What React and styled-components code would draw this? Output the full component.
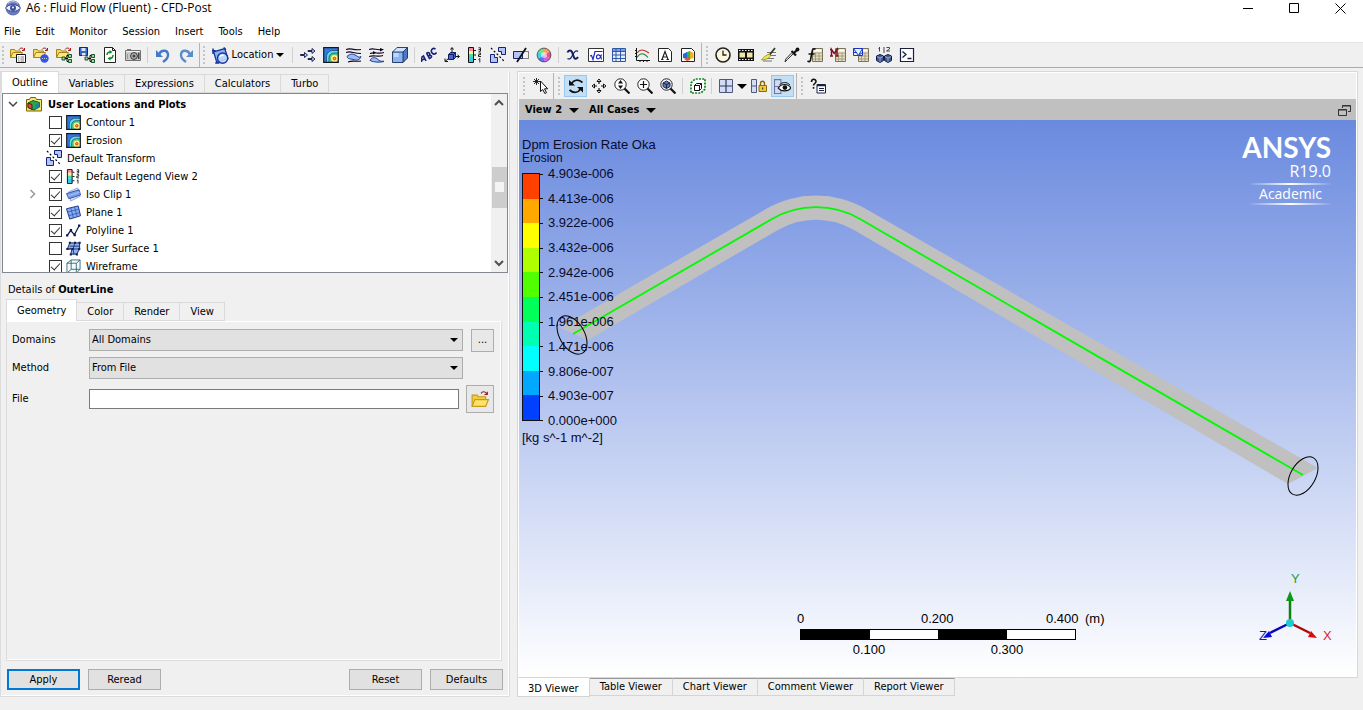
import React from 'react';
import styled, { createGlobalStyle, css } from 'styled-components';

const GlobalStyle = createGlobalStyle`
  * { box-sizing: border-box; }
  html, body { margin: 0; padding: 0; }
  body, button, input, select {
    font-family: "DejaVu Sans Condensed", "DejaVu Sans", sans-serif;
    font-size: 11px;
    line-height: 14px;
    color: #000;
  }
  button { padding: 0; border: 0; background: none; }
`;

/* ---------- icons ---------- */

const folder = (
  <>
    <path d="M.5 10.500v-8h4l1 1.500h5v2" fill="#f6d860" stroke="#a88418" />
    <path d="M.5 10.500 3 5.500h9.500l-2.500 5z" fill="#ffe680" stroke="#a88418" />
    <path d="M9 2.500c1.500-2 4-2 5 .5m.5-2v2.500h-2.500" fill="none" stroke="#a01818" />
  </>
);

const treeGlyph = (
  <>
    <path d="M8 11.500h4m-1-3v6m0-6h1m-1 6h1" stroke="#000" fill="none" />
    <path d="M6 10h3v3H6zM12.500 7.500h3v3h-3zM12.500 12.500h3v3h-3z" fill="#9be08a" stroke="#042" strokeWidth=".9" />
  </>
);

const contour = (
  <>
    <path d="M1 1h14v14H1z" fill="#3478e4" />
    <path d="M3.500 15V10c0-4 3-6.500 6.500-6.500h5V15z" fill="#58e0e8" />
    <path d="M6 15v-4c0-3 2-5 5-5h4v9z" fill="#50c878" />
    <circle cx="11.500" cy="11.500" r="3.400" fill="#fff080" />
    <circle cx="11.500" cy="11.500" r="1.300" fill="#ffb040" stroke="#d03018" />
    <path d="M3.500 15V10c0-4 3-6.500 6.500-6.500h5M6 15v-4c0-3 2-5 5-5h4" fill="none" stroke="#14406c" strokeWidth=".7" />
    <path d="M.7.7h14.600v14.600H.7z" fill="none" stroke="#101820" strokeWidth="1.200" />
  </>
);

const magnifier = (
  <>
    <circle cx="6.500" cy="6.500" r="5.700" fill="#fff" stroke="#222" />
    <path d="m10.500 10.500 5 5" stroke="#111" strokeWidth="2.200" />
  </>
);

const calcPad = (
  <>
    <path d="M5.500 1.500h10v13h-10z" fill="#e6dfc4" stroke="#7b7358" />
    <path d="M7 3.500h7" stroke="#fff" strokeWidth="2" />
    <path d="M6 6h9M6 9h9M6 12h9M8.500 6v8M12 6v8" stroke="#9a9170" strokeWidth=".8" />
  </>
);

const transformGlyph = (
  <>
    <path d="M1 1l14 14" stroke="#000" strokeWidth="1.200" strokeDasharray="2 2" />
    <path d="M8.500.5h7v7h-4v-3h-3z" fill="#b4c4f4" stroke="#15207a" />
    <path d="M.5 7.500h4v3h3v5h-7z" fill="#b4c4f4" stroke="#15207a" />
  </>
);

const legendGlyph = (
  <>
    <path d="M1 1h6v3H1z" fill="#fa8a9c" />
    <path d="M1 4h6v3H1z" fill="#fff0a0" />
    <path d="M1 7h6v3H1z" fill="#48e0a0" />
    <path d="M1 10h6v5H1z" fill="#38c8ec" />
    <path d="M1.500.5h5v15h-5zM7 3.500h2M7 8h2M7 12.500h2" fill="none" stroke="#111" />
    <path d="M11.500.8h2v3.500h-2m2-1.700h-2M11.500 6h2v1.700h-2V9.500h2.500M12.800 11.500v4M11.500 12.500l1.300-1" fill="none" stroke="#111" strokeWidth=".9" />
  </>
);

const ICONS = {
  app: (
    <>
      <circle cx="8" cy="8" r="7.500" fill="#6878bc" />
      <path d="M.5 8C4 3.500 12 3.500 15.500 8 12 12.500 4 12.500.5 8z" fill="#eef0ff" stroke="#3d4c94" />
      <circle cx="8" cy="8" r="3" fill="#3c4f9c" />
      <circle cx="8" cy="7.500" r="1" fill="#fff" />
      <path d="M3 3.500c3-2.500 7-2.500 10 0" fill="none" stroke="#c8d0f0" />
    </>
  ),
  openCase: (
    <>
      {folder}
      <path d="M6.500 7.500h9v8h-9z" fill="#fff" stroke="#111" />
      <path d="M8 10h1.500m1 0H14m-6 2h1.500m1 0H14m-6 2h1.500m1 0H14" stroke="#555" strokeWidth=".8" />
    </>
  ),
  openResults: (
    <>
      {folder}
      <circle cx="11.500" cy="11.500" r="4.200" fill="#3452f0" />
      <path d="M9 11.500h1m1 0h1m1 0h1" stroke="#bcd" />
    </>
  ),
  openState: <>{folder}{treeGlyph}</>,
  saveState: (
    <>
      <path d="M.5.5h8v8h-8z" fill="#3d66c0" stroke="#182860" />
      <path d="M2.500 1h4v3h-4zM3 6h3.500v2.500H3z" fill="#d8e4fc" />
      {treeGlyph}
    </>
  ),
  refresh: (
    <>
      <path d="M2.500.5h8l3 3v12h-11z" fill="#fff" stroke="#222" />
      <path d="M10.500.5v3h3" fill="none" stroke="#222" />
      <path d="M5 8c0-2 1-3 3.500-3M11 8c0 2-1 3.500-3.500 3.500" fill="none" stroke="#168a28" strokeWidth="1.500" />
      <path d="M7.500 3l3 2-3 2zM8.500 9.500l-3 2 3 2z" fill="#168a28" />
    </>
  ),
  camera: (
    <>
      <path d="M.5 3.500h15v10H.5z" fill="#c8c8c8" stroke="#707070" />
      <path d="M2 2h4v1.500H2z" fill="#777" />
      <path d="M1 4.500h14" stroke="#f4f4f4" />
      <path d="M2.500 7v5" stroke="#999" />
      <circle cx="9" cy="9" r="3.400" fill="#b8b8b8" stroke="#333" />
      <circle cx="9" cy="9" r="1.600" fill="#444" />
      <path d="M13 5.500h1.500V12H13z" fill="#444" />
    </>
  ),
  undo: (
    <>
      <path d="M4 8c1-5 8-6 9-1 .5 3-2 6-5 8" fill="none" stroke="#4478c8" strokeWidth="2.400" />
      <path d="M1 3v7h7z" fill="#4478c8" />
    </>
  ),
  redo: (
    <>
      <path d="M12 8c-1-5-8-6-9-1-.5 3 2 6 5 8" fill="none" stroke="#5a8ccc" strokeWidth="2.400" />
      <path d="M15 3v7H8z" fill="#5a8ccc" />
    </>
  ),
  location: (
    <>
      <path d="M1.500 4.500 12 1.500l3 9.500-10.500 3.500z" fill="#88b0f4" stroke="#15359a" strokeWidth="1.200" />
      <path d="M1 1.500v5M0 3.500h3.500M11 .5l2 2M3 15h4" stroke="#15359a" strokeWidth="1.400" />
      <circle cx="10" cy="10.500" r="4.800" fill="#c0d8fc" fillOpacity=".9" stroke="#15359a" strokeWidth="1.300" />
      <path d="M7.500 9.500c.5-1.500 2-2 3.500-1.500" fill="none" stroke="#fff" strokeWidth="1.200" />
    </>
  ),
  vector: (
    <path d="M.5 7.500h4v-2l3 2.500-3 2.500v-2h-4zM8 3.500h4v-2l3 2.500-3 2.500v-2H8zM8 11.500h4v-2l3 2.500-3 2.500v-2H8z" fill="#b8d0f8" stroke="#0c1440" strokeWidth=".9" />
  ),
  contour,
  streamline: (
    <>
      <path d="M1 9.500c3-3 6-3 9-1s3 2 5 1c-1 4-5 4-8 3s-5 0-6-3z" fill="#9cbcf8" stroke="#1c3c90" />
      <path d="M0 2.500c5-2 6 1 15 0M0 5.500c5-2 7 1 15 1M2 15c5-2 8 0 13-1" fill="none" stroke="#102" strokeWidth="1.100" />
    </>
  ),
  particle: (
    <>
      <path d="M1 13.500c1-3 5-4 8-1s5 1 6 2c-4 1-10 1-14-1z" fill="#9cbcf8" stroke="#1c3c90" />
      <path d="M0 2.500c5-2 7 1 13 0M1 6.500c5-2 8 1 14-1M0 9.500c5-2 9 1 14-1" fill="none" stroke="#102" strokeWidth="1.100" />
      <path d="M11 1l4 1.500-4 2zM4 4l3 1.500-3 2z" fill="#102" />
    </>
  ),
  volume: (
    <>
      <path d="M.5 5 5 .5h10.500V11L11 15.500H.5z" fill="#d0e2fc" />
      <path d="M11 5H.5v10.500H11z" fill="#8cb4f0" />
      <path d="M11 5l4.500-4.500V11L11 15.500z" fill="#4c78c8" />
      <path d="M.5 5H11v10.500M11 5l4.500-4.500M.5 5 5 .5h10.500V11L11 15.500H.5z" fill="none" stroke="#182c60" strokeWidth=".9" />
      <path d="M1.500 6h5v4h-5z" fill="#bcd8fc" />
    </>
  ),
  textLabel: (
    <path d="m.5 10.500 2-1.500 2.500 5M.5 10.500V15M1 13l3-1.500M5.500 6l3 5.500c3-1 2.500-3.500 0-3 1-1.500-.5-4-3-2.500m1.500 3 1.500-.5M14.500 2C11 0 9 4 11.500 6.500c1.500 1 3 .5 4-1" fill="none" stroke="#15207a" strokeWidth="1.600" />
  ),
  coord: (
    <>
      <path d="M8 7V1M6.500 2.500 8 .5l1.500 2M10 9.500h5M13.500 8l2 1.500-2 1.500M5 11l-4 3.500M1 11.500V14.500h3" fill="none" stroke="#111" />
      <path d="M4.500 7.500 6.500 5.500h5v5l-2 2h-5z" fill="#4c64d0" stroke="#101c60" />
      <path d="M4.500 7.500h5v5m0-5 2-2" fill="none" stroke="#101c60" />
    </>
  ),
  legend: legendGlyph,
  transform: transformGlyph,
  clip: (
    <>
      <path d="M.5 4.500h9v7h-9z" fill="#b4c4f4" stroke="#15207a" />
      <path d="M9.500 4.500h6v7h-6" fill="none" stroke="#111" strokeDasharray="1 1" />
      <path d="M13 1 4 15" stroke="#111" strokeWidth="1.800" />
    </>
  ),
  colormap: (
    <>
      <path d="M8 8V1a7 7 0 0 1 6 3.500z" fill="#f8a060" />
      <path d="m8 8 6-3.500a7 7 0 0 1 0 7z" fill="#f05080" />
      <path d="m8 8 6 3.500A7 7 0 0 1 8 15z" fill="#c868e8" />
      <path d="M8 8v7a7 7 0 0 1-6-3.500z" fill="#5878f0" />
      <path d="m8 8-6 3.500a7 7 0 0 1 0-7z" fill="#40d0e8" />
      <path d="M8 8 2 4.500A7 7 0 0 1 8 1z" fill="#70e080" />
      <circle cx="8" cy="8" r="3" fill="#fff" fillOpacity=".55" />
      <circle cx="8" cy="8" r="6.900" fill="none" stroke="#444" strokeWidth=".8" />
    </>
  ),
  variable: (
    <>
      <path d="M2.500 5.500C3.500 3 6 3 7 5l2 5.500c.7 2 2.800 1.500 4-.5" fill="none" stroke="#101c60" strokeWidth="2" />
      <path d="M13 4.500C11.500 3 10 4 8.500 6.500l-2 3.500c-1 2-2.500 2.500-4 1.500" fill="none" stroke="#101c60" strokeWidth="1.200" />
    </>
  ),
  expression: (
    <>
      <path d="M.5 1.500h15v13H.5z" fill="#fff" stroke="#333" />
      <path d="M2 9l1.500-.5 1.500 4L7 4.500h7.500M13.500 7.500c-1 5-5 5.500-5 2.500s4-3.500 5 2.500" fill="none" stroke="#1a2cc0" strokeWidth="1.200" />
    </>
  ),
  table: (
    <>
      <path d="M1.500 1.500h13v13h-13z" fill="#e4eefc" stroke="#3058a8" />
      <path d="M2 2h12v2.500H2z" fill="#7ca0e0" />
      <path d="M1.500 4.500h13M1.500 8h13M1.500 11.500h13M5 2v12M9.500 2v12" stroke="#3058a8" fill="none" />
    </>
  ),
  chart: (
    <>
      <path d="M2.500 1v12.500H16M1 3.500h1.500M1 6.500h1.500M1 9.500h1.500M6 13.500V15M9.500 13.500V15M13 13.500V15" stroke="#111" fill="none" />
      <path d="M3 6c3-4 6-4 12 0" fill="none" stroke="#c82828" strokeWidth="1.200" />
      <path d="M3 10.500c3-5 7-5 11 0" fill="none" stroke="#1c9038" strokeWidth="1.200" />
    </>
  ),
  comment: (
    <>
      <path d="M1.500 1.500h10l3 3v10h-13z" fill="#fff" stroke="#222" />
      <path d="m5 12.500 3-8 3 8M6 10h4M4 12.500h2.500M9.500 12.500H12" fill="none" stroke="#222" strokeWidth="1.200" />
    </>
  ),
  figure: (
    <>
      <path d="M1.500 1.500h10l3 3v10h-13z" fill="#fff" stroke="#222" />
      <path d="M3 7l4-2v7l-4-1z" fill="#2868d8" />
      <path d="M7 5l3-1v7l-3 1z" fill="#28b850" />
      <path d="M10 4l3.500 2v5L10 12z" fill="#f0b020" />
      <path d="M4 12l3-1 3-1v3l-3 1z" fill="#e85820" />
    </>
  ),
  timestep: (
    <>
      <circle cx="8" cy="8" r="7" fill="#fbf6dc" stroke="#222" strokeWidth="1.600" />
      <path d="M8 3.500V8h3.500" fill="none" stroke="#222" strokeWidth="1.300" />
    </>
  ),
  animation: (
    <>
      <path d="M0 2h16v12H0z" fill="#111" />
      <path d="M1.500 5.500H7v5H1.500zM9 5.500h5.500v5H9z" fill="#efe6a8" />
      <path d="M1 3.500h14M1 12.500h14" stroke="#fff" strokeDasharray="1.500 1.500" />
    </>
  ),
  quickEdit: (
    <>
      <path d="M6 5.500h9M6 8.500h9M4 11.500h9M2 14h9" stroke="#666" strokeWidth=".9" />
      <path d="M14 1 8.500 8" stroke="#2c3c20" strokeWidth="1.700" />
      <path d="M8.500 7c-3 1-6 3-8 6 3 0 7-1 9-4z" fill="#f0e850" stroke="#908a20" strokeWidth=".8" />
    </>
  ),
  probe: (
    <>
      <path d="M9 7 3.500 12.500l-2.500 2.500.8-3L7.500 6" fill="#d8e8f8" stroke="#333" />
      <path d="m7.500 4 4.500 4.500M9.500 6.500 13.500 2.500" stroke="#111" strokeWidth="2.200" />
      <circle cx="13.500" cy="2.500" r="1.900" fill="#111" />
    </>
  ),
  functionCalc: (
    <>
      {calcPad}
      <path d="M8.500 2.500c-2-1.500-3-.5-3.500 2.500l-1.500 8c-.5 2-1.500 2-3 1M1.500 7H7.500" fill="none" stroke="#111" strokeWidth="1.600" />
    </>
  ),
  macroCalc: (
    <>
      {calcPad}
      <path d="M1.500 9V2.500l2.700 4 2.800-4V9M0 9h3M5.500 9h3M0 2.500h2M6.500 2.500h2" fill="none" stroke="#801020" strokeWidth="1.500" />
    </>
  ),
  meshCalc: (
    <>
      {calcPad}
      <path d="M.5 1.500h9v7h-9z" fill="#e8f0ff" stroke="#1838c8" />
      <path d="m.5 1.500 5 7 4-7M.5 5.500h3m6 0-4 3" stroke="#1838c8" fill="none" />
    </>
  ),
  compare: (
    <>
      <path d="M3.500 0v4.500M2.500 1.500l1-1M10.500.5h3V2l-3 2h3.500M8 0v6" fill="none" stroke="#333" strokeWidth=".9" />
      <path d="M.5 9 4 7.500 7.500 9v4.500L4 15.500.5 13.500zM8.500 9 12 7.500 15.500 9v4.500l-3.500 2-3.500-2z" fill="#43598c" stroke="#101c48" />
      <path d="M1 9.500 4 11l3-1.500M4 11v4M9 9.500 12 11l3-1.500M12 11v4" fill="none" stroke="#a8bce8" strokeWidth=".8" />
    </>
  ),
  commandEditor: (
    <>
      <path d="M1.500 1.500h13v13h-13z" fill="#fff" stroke="#182040" strokeWidth="1.200" />
      <path d="m3.500 4.500 3.500 3-3.500 3M8.500 11.500h4" fill="none" stroke="#182040" strokeWidth="1.300" />
    </>
  ),
  select: (
    <>
      <path d="M3.500 0v7M0 3.500h7M1 1l5 5M6 1 1 6" stroke="#111" strokeWidth=".9" />
      <path d="M7.500 3v10.500l2.300-2 2 4 1.700-.8-2-3.900h3.200z" fill="#fff" stroke="#111" />
    </>
  ),
  rotate: (
    <>
      <path d="M3.500 6c2-4.500 7-5 11-1.500M12.500 10.500c-2 4.500-7 5-11 1.500" fill="none" stroke="#111" strokeWidth="1.700" />
      <path d="M1 2v5.500h6zM15 14.500V9H9z" fill="#111" />
    </>
  ),
  pan: (
    <>
      <path d="M8 3v3m0 4v3M3 8h3m4 0h3" stroke="#111" strokeWidth="1.200" />
      <path d="M8 1 6 3.500h4zM8 15l-2-2.500h4zM1 8l2.500-2v4zM15 8l-2.500-2v4z" fill="#fff" stroke="#111" />
    </>
  ),
  zoom: <>{magnifier}<path d="M6.500 2 4 5.500h5zM6.500 11 4 7.500h5z" fill="#111" /></>,
  zoomBox: <>{magnifier}<path d="M6.500 3v7M3 6.500h7" stroke="#111" strokeWidth="1.200" /></>,
  fit: (
    <>
      {magnifier}
      <path d="m3 5 3.500-2L10 5v3.500l-3.500 2L3 8.500z" fill="#6478b8" stroke="#182448" />
      <path d="m3 5 3.500 1.500L10 5M6.500 6.500v4" fill="none" stroke="#182448" />
    </>
  ),
  highlight: (
    <>
      <path d="M1 5 5 1h10v10l-4 4H1z" fill="#fff" stroke="#108020" strokeWidth="1.700" strokeDasharray="2 1.200" />
      <path d="M4.500 7.500l2-2h5v5l-2 2h-5zM4.500 7.500h5v5m0-5 2-2" fill="#fff" stroke="#111" />
    </>
  ),
  views: (
    <>
      <path d="M1.500 1.500h13v13h-13z" fill="#d4dcf4" stroke="#4c587c" />
      <path d="M8 2v12M2 8h12" stroke="#2c3858" strokeWidth="1.200" />
    </>
  ),
  syncCamera: (
    <>
      <path d="M.5 1.500h5v13h-5zM.5 8h5" fill="#d4dcf4" stroke="#4c587c" />
      <path d="M9.500 8V5.500c0-3 4-3 4 0V8" fill="none" stroke="#8a6c10" strokeWidth="1.400" />
      <path d="M8 7.500h7.500v6H8z" fill="#f0c848" stroke="#8a6c10" />
      <path d="M11.700 9.500v2" stroke="#222" />
    </>
  ),
  syncVisibility: (
    <>
      <path d="M.5 1.500h6v13h-6zM.5 8h6" fill="#d4dcf4" stroke="#6c78a0" />
      <path d="M4 9.500C7 5 13 5 16 9.500c-3 3.500-9 3.500-12 0z" fill="#fff" stroke="#111" strokeWidth="1.100" />
      <circle cx="10.300" cy="9" r="2.200" fill="#111" />
      <path d="M5 6.500c3-3 7-3 10 0" fill="none" stroke="#111" strokeWidth=".9" />
    </>
  ),
  help: (
    <>
      <path d="M1.500 4c0-3.500 4.500-3.500 4.500-.5 0 2-2.500 2-2.500 4M3.500 9v1.800" fill="none" stroke="#111" strokeWidth="1.600" />
      <path d="M7 6.500h8.500v8.500H7z" fill="#fff" stroke="#182048" />
      <path d="M7 7.500h8" stroke="#182048" strokeWidth="1.500" />
      <path d="M9 10.500h5m-5 2h5" stroke="#182048" />
    </>
  ),
  group: (
    <>
      <path d="M.5 3.500h3l1-2h5l1 2h5v11.500H.5z" fill="#f4ea68" stroke="#6c6410" />
      <path d="m2 7 5-2.500 6.500 2V11L8 14l-6-2.500z" fill="#28a850" stroke="#0c3020" strokeWidth=".8" />
      <path d="m9 9 4.500-2.500V11L9 13.500z" fill="#2080b0" />
      <path d="m2 7 4 1.500v5L2 11.500z" fill="#e04830" stroke="#301008" strokeWidth=".8" />
    </>
  ),
  isoClip: (
    <>
      <path d="M3 5 12.500 1l2.500 9-10 5z" fill="#d4e0f8" stroke="#98a8cc" />
      <path d="M.5 7 14 3l1.500 5.500L3 12.500z" fill="#78a0ec" stroke="#2448a0" strokeWidth=".9" />
      <path d="M2 9.500 14.500 5.500" stroke="#a8c4fa" />
    </>
  ),
  plane: (
    <>
      <path d="M.5 4 13 1l2.500 10.500L4 15z" fill="#88acf0" stroke="#15308a" />
      <path d="M1.500 7.500l12.500-3M2.500 11.500 15 8M5 3l3 11M9 2l3 10.500" stroke="#2c50b0" fill="none" strokeWidth=".8" />
    </>
  ),
  polyline: (
    <>
      <path d="M1.500 13 5 8 9 12.500 14 3" fill="none" stroke="#101c58" strokeWidth="1.400" />
      <path d="M0 12h2.500v2.500H0zM4 6.500h2.500V9H4zM8 11.500h2.500V14H8zM12.800 1.500h2.500V4h-2.500z" fill="#101c58" />
    </>
  ),
  userSurface: (
    <>
      <path d="M4 2h10.500v6.500l-3 5.500H5l1.500-5.500H1.500z" fill="#8cb0f0" stroke="#101c58" />
      <path d="M2 8.500h12M9.500 2 7.500 8.500l1 5.500M4 5.500h10" stroke="#101c58" fill="none" strokeWidth=".8" />
      <path d="M3 .8h2.200V3H3zM8.500.8h2.200V3H8.500zM13.500.8h2.200V3h-2.200zM.3 7.500h2.200v2.200H.3zM6 7.500h2.200v2.200H6zM13 7.500h2.200v2.200H13zM4 13.200h2.200v2.200H4zM10.500 13.200h2.200v2.200h-2.200z" fill="#101c58" />
    </>
  ),
  wireframe: (
    <path d="M1 4.500l4.500-3.500H15v10l-4 4H1zM1 4.500h10V15m0-10.500L15 1M5.500 1v10H15m-9.500 0L1 15" fill="#f4fbfb" stroke="#246070" strokeWidth=".9" />
  ),
};

const Svg = styled.svg`
  display: block;
  flex: none;
  width: ${(p) => p.$size}px;
  height: ${(p) => p.$size}px;
`;

const Icon = ({ name, size = 16 }) => (
  <Svg viewBox="0 0 16 16" $size={size} aria-hidden="true">{ICONS[name]}</Svg>
);

const Caret = styled.span`
  flex: none;
  width: 0;
  height: 0;
  border: ${(p) => p.$size || 4}px solid transparent;
  border-bottom-width: 0;
  border-top-color: #000;
`;

/* ---------- window frame ---------- */

const Window = styled.div`
  display: flex;
  flex-direction: column;
  min-height: 100vh;
  background: #f0f0f0;
  overflow: hidden;
`;

const TitleBar = styled.header`
  display: flex;
  align-items: center;
  gap: 5px;
  height: 20px;
  padding: 0 8px 4px 5px;
  background: #fff;
`;

const Title = styled.h1`
  flex: 1;
  margin: 0;
  font: 400 12px/16px "Open Sans", "Noto Sans", sans-serif;
`;

const WindowButtons = styled.div`
  display: flex;
  gap: 16px;
`;

const WindowButton = styled.button`
  display: grid;
  place-items: center;
  width: 30px;
  height: 14px;
`;

const WindowSvg = styled.svg`
  display: block;
  width: 11px;
  height: 11px;
  fill: none;
  stroke: #000;
`;

const MenuBar = styled.nav`
  display: flex;
  align-items: center;
  gap: 15px;
  height: 23px;
  padding: 2px 4px 0;
  border-bottom: 1px solid #e4e4e4;
  background: #fff;
`;

const MenuItem = styled.button`
  height: 20px;
`;

const ToolBar = styled.div`
  display: flex;
  align-items: center;
  height: ${(p) => p.$height}px;
  border-bottom: ${(p) => (p.$ruled ? '1px solid #a8adaa' : '0')};
`;

const ToolGroup = styled.div`
  display: flex;
  align-items: center;
  align-self: stretch;
  padding-right: ${(p) => (p.$tight ? 0 : 2)}px;
  border-right: ${(p) => (p.$last ? '0' : '1px solid #b4b4b4')};
`;

const Grip = styled.span`
  width: ${(p) => p.$width}px;
  height: 18px;
  background: radial-gradient(circle, #c4c4c4 1px, transparent 1px) center / 4px 4px repeat-y;
`;

const Separator = styled.span`
  width: ${(p) => p.$width}px;
  height: 16px;
  background: linear-gradient(#d0d0d0, #d0d0d0) center / 1px 100% no-repeat;
`;

const ToolButton = styled.button`
  display: grid;
  place-items: center;
  width: ${(p) => p.$width || 23}px;
  height: 22px;
  ${(p) => p.$active && css`
    background: #c2dff5;
    box-shadow: inset 0 0 0 1px #98c8ee;
  `}
`;

const LocationButton = styled.button`
  display: flex;
  align-items: center;
  justify-content: space-between;
  width: 81px;
  height: 22px;
  padding: 0 5px 0 4px;
`;

/* ---------- panes and tabs ---------- */

const Body = styled.main`
  display: flex;
  flex: 1;
  gap: 7px;
  padding: 3px 5px 13px 0;
`;

const LeftPane = styled.section`
  display: flex;
  flex-direction: column;
  flex: 0 0 510px;
  border: 1px solid #dcdcdc;
  border-top: 0;
  box-shadow: inset -1px -1px #fff;
`;

const TabList = styled.div`
  display: flex;
  align-items: flex-end;
  height: 22px;
`;

const Tab = styled.button`
  height: ${(p) => (p.$active ? 22 : 19)}px;
  padding: 0 10px;
  border: 1px solid #dadada;
  border-left-width: ${(p) => (p.$active ? 1 : 0)}px;
  border-bottom-width: ${(p) => (p.$active ? 0 : 1)}px;
  background: ${(p) => (p.$active ? '#fff' : '#f0f0f0')};
`;

const TreeBox = styled.div`
  display: flex;
  height: 180px;
  margin: 0 1px;
  border: 1px solid #828790;
  background: #fff;
  overflow: hidden;
`;

const Tree = styled.ul`
  flex: 1;
  margin: 0;
  padding: 1px 0 0;
  list-style: none;
`;

const TreeRow = styled.li`
  display: flex;
  align-items: center;
  height: 18px;
  padding-left: ${(p) => p.$indent}px;
  font-weight: ${(p) => (p.$bold ? 700 : 400)};
`;

const RowLabel = styled.label`
  display: flex;
  align-items: center;
  gap: 4px;
  height: 16px;
  white-space: nowrap;
`;

const RowText = styled.span`
  margin-left: ${(p) => p.$space}px;
  padding-top: 2px;
`;

const GroupIcon = styled.span`
  margin-left: 8px;
`;

const CheckBox = styled.input`
  appearance: none;
  display: grid;
  place-items: center;
  width: 13px;
  height: 13px;
  margin: 0;
  border: 1px solid #333;
  background: #fff;
  &:checked::after {
    content: "";
    width: 4px;
    height: 8px;
    margin-top: -2px;
    border: solid #333;
    border-width: 0 1px 1px 0;
    transform: rotate(42deg);
  }
`;

const Chevron = styled.svg`
  flex: none;
  width: 10px;
  height: 10px;
  margin-right: ${(p) => p.$gap || 0}px;
  fill: none;
  stroke: ${(p) => p.$color};
  stroke-width: ${(p) => p.$weight || 1.5};
`;

const ScrollBar = styled.div`
  display: flex;
  flex-direction: column;
  align-items: center;
  justify-content: space-between;
  width: 16px;
  padding: 4px 0;
  background: #f0f0f0;
`;

const Thumb = styled.div`
  display: grid;
  place-items: center;
  width: 15px;
  height: 41px;
  margin-top: 8px;
  background: #cdcdcd;
  &::after {
    content: "";
    width: 9px;
    height: 10px;
    background: #f4f4f4;
  }
`;

const DetailsTitle = styled.h2`
  margin: 10px 0 4px 7px;
  font-size: 11px;
  font-weight: 400;
  line-height: 14px;
`;

const DetailTabs = styled(TabList)`
  height: 20px;
  padding-left: 5px;
`;

const DetailPanel = styled.form`
  display: flex;
  flex-direction: column;
  flex: 1;
  margin: 0 7px 8px 5px;
  padding: 6px 7px 0 5px;
  border: 1px solid #dcdcdc;
  border-top-color: #fff;
  box-shadow: inset -1px -1px #fff;
`;

const Field = styled.div`
  display: flex;
  align-items: center;
  height: ${(p) => p.$height}px;
  padding-right: ${(p) => p.$inset || 0}px;
`;

const FieldLabel = styled.label`
  flex: 0 0 77px;
`;

const SelectWrap = styled.div`
  position: relative;
  display: flex;
  flex: 1;
  ${Caret} {
    position: absolute;
    right: 5px;
    top: 9px;
  }
`;

const Select = styled.select`
  appearance: none;
  flex: 1;
  height: 22px;
  padding: 0 2px;
  border: 1px solid #adadad;
  border-radius: 0;
  background: #e1e1e1;
`;

const TextInput = styled.input`
  flex: 1;
  min-width: 0;
  height: 20px;
  padding: 0 3px;
  border: 1px solid #7a7a7a;
  background: #fff;
`;

const SquareButton = styled.button`
  display: grid;
  place-items: center;
  width: ${(p) => p.$size}px;
  height: ${(p) => p.$size}px;
  margin-left: ${(p) => p.$space}px;
  border: 1px solid #adadad;
  background: #e8e8e8;
`;

const ButtonRow = styled.div`
  display: flex;
  gap: 8px;
  padding: 0 6px 6px;
`;

const PushButton = styled.button`
  width: 73px;
  height: 21px;
  border: ${(p) => (p.$primary ? '2px solid #0078d7' : '1px solid #adadad')};
  background: #e1e1e1;
`;

const Filler = styled.span`
  flex: 1;
`;

/* ---------- viewer ---------- */

const RightPane = styled.section`
  display: flex;
  flex: 1;
  flex-direction: column;
  min-width: 0;
`;

const ViewerFrame = styled.div`
  display: flex;
  flex: 1;
  flex-direction: column;
  border: 1px solid #d8d8d8;
  box-shadow: inset 1px 1px #fff, inset -1px -1px #fff;
  padding: 1px 1px 0;
`;

const ViewBar = styled.div`
  display: flex;
  align-items: center;
  gap: 10px;
  height: 21px;
  padding: 1px 5px 0 6px;
  background: #c0c0c0;
`;

const ViewButton = styled.button`
  display: flex;
  align-items: center;
  gap: 7px;
  font-weight: 700;
`;

const Canvas = styled.div`
  position: relative;
  display: flex;
  flex: 1;
  flex-direction: column;
  background: linear-gradient(#6a8adf, #fff);
  font: 13px/14px "Liberation Sans", Arial, sans-serif;
`;

const Scene = styled.svg`
  position: absolute;
  inset: 0;
  width: 100%;
  height: 100%;
`;

const Overlay = styled.div`
  position: relative;
  display: flex;
  justify-content: space-between;
  flex: 1;
`;

const Legend = styled.div`
  padding: 18px 0 0 3px;
  color: #0a0a28;
`;

const LegendName = styled.div`
  font-size: 12px;
  line-height: 12px;
`;

const LegendScale = styled.div`
  display: flex;
  height: 261px;
  margin: 3px 0;
`;

const LegendBar = styled.div`
  display: flex;
  flex-direction: column;
  width: 18px;
  margin: 6px 0 7px;
  border: 1px solid #111;
`;

const LegendBand = styled.div`
  flex: 1;
  background: ${(p) => p.$color};
`;

const LegendLabels = styled.div`
  display: flex;
  flex-direction: column;
  justify-content: space-between;
`;

const LegendLabel = styled.div`
  display: flex;
  align-items: center;
  gap: 5px;
  &::before {
    content: "";
    width: 3px;
    height: 1px;
    background: #111;
  }
`;

const Brand = styled.div`
  display: flex;
  flex-direction: column;
  align-items: flex-end;
  padding: 12px 25px 0 0;
  color: #fff;
  font-family: Lato, "Noto Sans", sans-serif;
`;

const BrandName = styled.div`
  font-size: 28px;
  font-weight: 700;
  line-height: 30px;
`;

const BrandVersion = styled.div`
  font: 16px/18px "Open Sans", "Noto Sans", sans-serif;
`;

const BrandEdition = styled.div`
  margin-top: 3px;
  padding: 0 9px;
  border: solid;
  border-width: 2px 0;
  border-image: linear-gradient(90deg, transparent, #fff 50%, transparent) 2;
  font: 14px/18px "Open Sans", "Noto Sans", sans-serif;
`;

const Footer = styled.div`
  position: relative;
  display: flex;
  align-items: flex-end;
  justify-content: space-between;
  padding: 0 22px 20px 276px;
`;

const Ruler = styled.div`
  display: flex;
  flex-direction: column;
  gap: 3px;
`;

const TopLabels = styled.div`
  display: grid;
  grid-template-columns: 124px 125px 39px auto;
  padding-left: 2px;
`;

const BottomLabels = styled.div`
  display: grid;
  grid-template-columns: 138px 138px;
  padding-left: 5px;
  text-align: center;
`;

const RulerBar = styled.div`
  display: flex;
  width: 276px;
  height: 11px;
  margin-left: 5px;
  border: 1px solid #000;
`;

const RulerStep = styled.div`
  flex: 1;
  background: ${(p) => (p.$filled ? '#000' : '#fff')};
`;

const Triad = styled.svg`
  width: 84px;
  height: 86px;
  margin-bottom: 8px;
  font: 13px "Liberation Sans", Arial, sans-serif;
`;

const ViewerTabs = styled.div`
  display: flex;
  align-items: flex-start;
  height: 19px;
`;

const ViewerTab = styled.button`
  height: ${(p) => (p.$active ? 19 : 18)}px;
  padding: ${(p) => (p.$active ? '3px 10px 0' : '0 10px')};
  border: solid #d4d4d4;
  border-width: 0 1px 1px ${(p) => (p.$active ? 1 : 0)}px;
  border-top: ${(p) => (p.$active ? '0' : '1px solid #989898')};
  background: ${(p) => (p.$active ? '#fff' : '#f0f0f0')};
  white-space: nowrap;
`;

/* ---------- data ---------- */

const MENUS = ['File', 'Edit', 'Monitor', 'Session', 'Insert', 'Tools', 'Help'];
const FILE_TOOLS = ['openCase', 'openResults', 'openState', 'saveState', 'refresh', 'camera'];
const INSERT_TOOLS = ['vector', 'contour', 'streamline', 'particle', 'volume'];
const LABEL_TOOLS = ['textLabel', 'coord', 'legend', 'transform', 'clip', 'colormap'];
const DATA_TOOLS = ['variable', 'expression', 'table', 'chart', 'comment', 'figure'];
const EXTRA_TOOLS = ['timestep', 'animation', 'quickEdit', 'probe', 'functionCalc', 'macroCalc', 'meshCalc', 'compare', 'commandEditor'];
const TREE = [
  { text: 'Contour 1', icon: 'contour', checked: false },
  { text: 'Erosion', icon: 'contour', checked: true },
  { text: 'Default Transform', icon: 'transform' },
  { text: 'Default Legend View 2', icon: 'legend', checked: true },
  { text: 'Iso Clip 1', icon: 'isoClip', checked: true, expandable: true },
  { text: 'Plane 1', icon: 'plane', checked: true },
  { text: 'Polyline 1', icon: 'polyline', checked: true },
  { text: 'User Surface 1', icon: 'userSurface', checked: false },
  { text: 'Wireframe', icon: 'wireframe', checked: true },
];
const BANDS = ['#ff4000', '#ffa800', '#ffff00', '#b0ff00', '#50ff00', '#00ff58', '#00ffb0', '#00ffff', '#00a8ff', '#0040ff'];
const LEVELS = ['4.903e-006', '4.413e-006', '3.922e-006', '3.432e-006', '2.942e-006', '2.451e-006', '1.961e-006', '1.471e-006', '9.806e-007', '4.903e-007', '0.000e+000'];

const Tools = ({ names }) => names.map((name) => (
  <ToolButton key={name} type="button" aria-label={name}><Icon name={name} /></ToolButton>
));

const TreeItem = ({ item }) => {
  if (item.checked === undefined) {
    return (
      <TreeRow $indent={43}>
        <Icon name={item.icon} />
        <RowText $space={5}>{item.text}</RowText>
      </TreeRow>
    );
  }
  return (
    <TreeRow $indent={item.expandable ? 24 : 46}>
      {item.expandable && (
        <Chevron viewBox="0 0 10 10" $color="#999" $gap={12}><path d="m3.500 1 4 4-4 4" /></Chevron>
      )}
      <RowLabel>
        <CheckBox type="checkbox" defaultChecked={item.checked} />
        <Icon name={item.icon} size={15} />
        <RowText $space={1}>{item.text}</RowText>
      </RowLabel>
    </TreeRow>
  );
};

const MainTools = () => (
  <ToolBar $height={25} $ruled>
    <ToolGroup>
      <Grip $width={6} />
      <Tools names={FILE_TOOLS} />
      <Separator $width={7} />
      <Tools names={['undo', 'redo']} />
    </ToolGroup>
    <ToolGroup>
      <Grip $width={8} />
      <LocationButton type="button"><Icon name="location" size={17} />Location<Caret /></LocationButton>
      <Separator $width={7} />
      <Tools names={INSERT_TOOLS} />
      <Separator $width={6} />
      <Tools names={LABEL_TOOLS} />
      <Separator $width={6} />
      <Tools names={DATA_TOOLS} />
    </ToolGroup>
    <ToolGroup $last>
      <Grip $width={9} />
      <Tools names={EXTRA_TOOLS} />
    </ToolGroup>
  </ToolBar>
);

const OpenFolder = () => (
  <Svg viewBox="0 0 16 16" $size={18} aria-hidden="true">
    <path d="M1 14V4.500h4.500l1 1.500H13v3" fill="#f4cc38" stroke="#c49a20" />
    <path d="M1 14.500 3.500 8.500H15.500l-2.500 6z" fill="#ffe468" stroke="#c49a20" />
    <path d="M9 3c1-2 4-2 5 .5m.5-2v2.500H12" fill="none" stroke="#a01818" />
  </Svg>
);

const OutlinePane = () => (
  <LeftPane>
    <TabList role="tablist">
      {['Outline', 'Variables', 'Expressions', 'Calculators', 'Turbo'].map((t, i) => (
        <Tab key={t} type="button" role="tab" $active={i === 0}>{t}</Tab>
      ))}
    </TabList>
    <TreeBox>
      <Tree>
        <TreeRow $indent={5} $bold>
          <Chevron viewBox="0 0 10 10" $color="#444"><path d="m1 3 4 4 4-4" /></Chevron>
          <GroupIcon><Icon name="group" /></GroupIcon>
          <RowText $space={6}>User Locations and Plots</RowText>
        </TreeRow>
        {TREE.map((item) => <TreeItem key={item.text} item={item} />)}
      </Tree>
      <ScrollBar>
        <Chevron viewBox="0 0 10 10" $color="#505050" $weight={2}><path d="m1 7 4-4 4 4" /></Chevron>
        <Thumb />
        <Chevron viewBox="0 0 10 10" $color="#505050" $weight={2}><path d="m1 3 4 4 4-4" /></Chevron>
      </ScrollBar>
    </TreeBox>
    <DetailsTitle>Details of <b>OuterLine</b></DetailsTitle>
    <DetailTabs role="tablist">
      {['Geometry', 'Color', 'Render', 'View'].map((t, i) => (
        <Tab key={t} type="button" role="tab" $active={i === 0}>{t}</Tab>
      ))}
    </DetailTabs>
    <DetailPanel onSubmit={(e) => e.preventDefault()}>
      <Field $height={24}>
        <FieldLabel htmlFor="domains">Domains</FieldLabel>
        <SelectWrap>
          <Select id="domains"><option>All Domains</option></Select>
          <Caret />
        </SelectWrap>
        <SquareButton type="button" $size={23} $space={8}>...</SquareButton>
      </Field>
      <Field $height={32} $inset={31}>
        <FieldLabel htmlFor="method">Method</FieldLabel>
        <SelectWrap>
          <Select id="method"><option>From File</option></Select>
          <Caret />
        </SelectWrap>
      </Field>
      <Field $height={30}>
        <FieldLabel htmlFor="file">File</FieldLabel>
        <TextInput id="file" type="text" />
        <SquareButton type="button" $size={28} $space={7} aria-label="Browse"><OpenFolder /></SquareButton>
      </Field>
    </DetailPanel>
    <ButtonRow>
      <PushButton type="button" $primary>Apply</PushButton>
      <PushButton type="button">Reread</PushButton>
      <Filler />
      <PushButton type="button">Reset</PushButton>
      <PushButton type="button">Defaults</PushButton>
    </ButtonRow>
  </LeftPane>
);

const ViewerTools = () => (
  <ToolBar $height={26}>
    <ToolGroup $tight>
      <Grip $width={10} />
      <ToolButton type="button" aria-label="select" $width={24}><Icon name="select" /></ToolButton>
    </ToolGroup>
    <ToolGroup>
      <Grip $width={10} />
      <ToolButton type="button" aria-label="rotate" $active><Icon name="rotate" /></ToolButton>
      <Tools names={['pan', 'zoom', 'zoomBox', 'fit']} />
      <Separator $width={7} />
      <Tools names={['highlight']} />
      <Separator $width={5} />
      <Tools names={['views']} />
      <ToolButton type="button" aria-label="view layouts" $width={10}><Caret $size={5} /></ToolButton>
      <ToolButton type="button" aria-label="sync camera" $width={24}><Icon name="syncCamera" /></ToolButton>
      <ToolButton type="button" aria-label="sync visibility" $active><Icon name="syncVisibility" size={17} /></ToolButton>
    </ToolGroup>
    <ToolGroup $last>
      <Grip $width={9} />
      <Tools names={['help']} />
    </ToolGroup>
  </ToolBar>
);

const Pipe = () => (
  <Scene viewBox="0 0 837 557" aria-hidden="true">
    <path
      d="M41 208 247 89A100 100 0 0 1 347 89L799 348 769 364 335 110A76 76 0 0 0 259 110L69 220z"
      fill="#c0c0c0"
    />
    <path d="M54 214 253 99A88 88 0 0 1 341 99L784 355" fill="none" stroke="#00fa00" strokeWidth="1.800" />
    <ellipse cx="53" cy="215" rx="21" ry="12.400" transform="rotate(60 53 215)" fill="none" stroke="#000" />
    <ellipse cx="784" cy="356" rx="21" ry="12.400" transform="rotate(-60 784 356)" fill="none" stroke="#000" />
  </Scene>
);

const AxisTriad = () => (
  <Triad viewBox="0 0 84 86" aria-label="Axis triad">
    <path d="M40 60V38" stroke="#108010" strokeWidth="2.500" />
    <path d="m40 28 4 10h-8z" fill="#0a9a14" />
    <path d="m40 60 20 10" stroke="#b00808" strokeWidth="2.500" />
    <path d="m67 75-9-1 3-6z" fill="#e00808" />
    <path d="M40 60 20 70" stroke="#0808b8" strokeWidth="2.500" />
    <path d="m13 75 9-1-3-6z" fill="#0808d8" />
    <circle cx="40" cy="60" r="4" fill="#20c8d0" />
    <text x="41" y="20" fill="#20a040">Y</text>
    <text x="73" y="77" fill="#e02038">X</text>
    <text x="9" y="77" fill="#1818b0">Z</text>
  </Triad>
);

const Viewer = () => (
  <RightPane>
    <ViewerFrame>
      <ViewerTools />
      <ViewBar>
        <ViewButton type="button">View 2<Caret $size={5} /></ViewButton>
        <ViewButton type="button">All Cases<Caret $size={5} /></ViewButton>
        <Filler />
        <button type="button" aria-label="Restore view">
          <Svg viewBox="0 0 13 13" $size={13}>
            <path d="M4.500 4V1.500h8v6H10M.5 5.500h8v6h-8zM.5 6h8M4.500 2h8" fill="none" stroke="#333" />
          </Svg>
        </button>
      </ViewBar>
      <Canvas>
        <Pipe />
        <Overlay>
          <Legend>
            <div>Dpm Erosion Rate Oka</div>
            <LegendName>Erosion</LegendName>
            <LegendScale>
              <LegendBar>{BANDS.map((c) => <LegendBand key={c} $color={c} />)}</LegendBar>
              <LegendLabels>{LEVELS.map((l) => <LegendLabel key={l}>{l}</LegendLabel>)}</LegendLabels>
            </LegendScale>
            <div>[kg s^-1 m^-2]</div>
          </Legend>
          <Brand>
            <BrandName>ANSYS</BrandName>
            <BrandVersion>R19.0</BrandVersion>
            <BrandEdition>Academic</BrandEdition>
          </Brand>
        </Overlay>
        <Footer>
          <Ruler>
            <TopLabels>
              <span>0</span><span>0.200</span><span>0.400</span><span>(m)</span>
            </TopLabels>
            <RulerBar>
              <RulerStep $filled /><RulerStep /><RulerStep $filled /><RulerStep />
            </RulerBar>
            <BottomLabels>
              <span>0.100</span><span>0.300</span>
            </BottomLabels>
          </Ruler>
          <AxisTriad />
        </Footer>
      </Canvas>
    </ViewerFrame>
    <ViewerTabs role="tablist">
      {['3D Viewer', 'Table Viewer', 'Chart Viewer', 'Comment Viewer', 'Report Viewer'].map((t, i) => (
        <ViewerTab key={t} type="button" role="tab" $active={i === 0}>{t}</ViewerTab>
      ))}
    </ViewerTabs>
  </RightPane>
);

export default function App() {
  return (
    <Window>
      <GlobalStyle />
      <TitleBar>
        <Icon name="app" />
        <Title>A6 : Fluid Flow (Fluent) - CFD-Post</Title>
        <WindowButtons>
          <WindowButton type="button" aria-label="Minimize">
            <WindowSvg viewBox="0 0 11 11"><path d="M0 5.500h10" /></WindowSvg>
          </WindowButton>
          <WindowButton type="button" aria-label="Maximize">
            <WindowSvg viewBox="0 0 11 11"><path d="M.5.5h9v9h-9z" /></WindowSvg>
          </WindowButton>
          <WindowButton type="button" aria-label="Close">
            <WindowSvg viewBox="0 0 11 11"><path d="m.5.5 10 10m0-10-10 10" /></WindowSvg>
          </WindowButton>
        </WindowButtons>
      </TitleBar>
      <MenuBar>
        {MENUS.map((m) => <MenuItem key={m} type="button">{m}</MenuItem>)}
      </MenuBar>
      <MainTools />
      <Body>
        <OutlinePane />
        <Viewer />
      </Body>
    </Window>
  );
}
